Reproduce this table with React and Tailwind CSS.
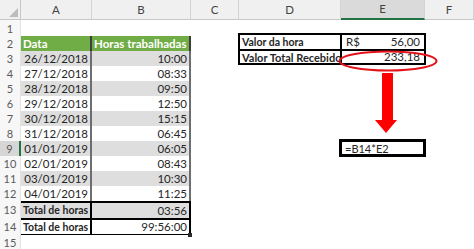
import React from 'react';

const horas = [
  ['26/12/2018', '10:00'],
  ['27/12/2018', '08:33'],
  ['28/12/2018', '09:50'],
  ['29/12/2018', '12:50'],
  ['30/12/2018', '15:15'],
  ['31/12/2018', '06:45'],
  ['01/01/2019', '06:05'],
  ['02/01/2019', '08:43'],
  ['03/01/2019', '10:30'],
  ['04/01/2019', '11:25'],
];

const ColHeader = ({ label, width, active = false }) => (
  <div
    className={`${width} h-full flex items-center justify-center border-r border-[#d4d4d4] text-[#444] ${
      active ? 'bg-[#dadada] border-b-2 border-b-[#217346]' : 'border-b border-b-[#c8c8c8]'
    }`}
  >
    {label}
  </div>
);

const RowLabel = ({ n, active = false }) => (
  <div
    className={`w-[21px] shrink-0 h-full flex items-center justify-center text-[#5a5a5a] ${
      active ? 'bg-[#d6d6d6] border-r-2 border-[#217346]' : 'bg-[#f7f7f7] border-r border-[#e3e3e3]'
    }`}
  >
    {n}
  </div>
);

const Row = ({ n, h = 'h-[15px]', active, children }) => (
  <div className={`flex ${h}`}>
    <RowLabel n={n} active={active} />
    {children}
  </div>
);

export default function App() {
  return (
    <div className="w-[474px] h-[249px] overflow-hidden bg-white font-['Lato',sans-serif] text-[11px] leading-none text-[#262626]">
      {/* column letters */}
      <div className="flex h-[20px] bg-[#f0f0f0] text-[11.5px]">
        <div className="w-[21px] h-full relative border-r border-b border-[#c8c8c8]">
          <div className="absolute right-[2px] bottom-[2px] w-0 h-0 border-l-[9px] border-l-transparent border-b-[9px] border-b-[#bdbdbd]" />
        </div>
        <ColHeader label="A" width="w-[71px]" />
        <ColHeader label="B" width="w-[99px]" />
        <ColHeader label="C" width="w-[48px]" />
        <ColHeader label="D" width="w-[102px]" />
        <ColHeader label="E" width="w-[84px]" active />
        <ColHeader label="F" width="flex-1" />
      </div>

      <div className="flex">
        {/* rows 1..15, columns A to C */}
        <div className="w-[239px] shrink-0">
          <Row n={1} h="h-[16px]">
            <div className="w-[218px]" />
          </Row>
          <Row n={2}>
            <div className="w-[71px] bg-[#70ad47] border-r-2 border-[#3d3d3d] text-white text-[11.5px] font-bold flex items-center pl-[2px]">Data</div>
            <div className="w-[99px] bg-[#70ad47] border-r-2 border-[#3d3d3d] text-white text-[11.5px] font-bold flex items-center pl-[2px] whitespace-nowrap">Horas trabalhadas</div>
          </Row>
          {horas.map(([data, hora], i) => {
            const shade = i % 2 === 0 ? 'bg-[#dedede]' : 'bg-white';
            return (
              <Row key={data} n={i + 3} active={i + 3 === 9}>
                <div className={`w-[71px] ${shade} border-r-2 border-[#6e6e6e] text-[11.5px] flex items-center justify-end pr-[2px]`}>{data}</div>
                <div className={`w-[99px] ${shade} border-r-2 border-[#6e6e6e] text-[11.5px] flex items-center justify-end pr-[2px]`}>{hora}</div>
              </Row>
            );
          })}
          <Row n={13} h="h-[17px]">
            <div className="w-[71px] bg-[#dedede] border-t-2 border-r-2 border-black flex items-center pl-[2px] text-[10.5px] font-bold whitespace-nowrap">Total de horas</div>
            <div className="w-[99px] bg-[#dedede] border-t-2 border-r-2 border-black text-[11.5px] flex items-center justify-end pr-[2px]">03:56</div>
          </Row>
          <Row n={14} h="h-[17px]">
            <div className="w-[71px] border-t-2 border-b border-r-2 border-black flex items-center pl-[2px] text-[10.5px] font-bold whitespace-nowrap">Total de horas</div>
            <div className="w-[99px] relative border-t-2 border-b border-r-2 border-black text-[11.5px] flex items-center justify-end pr-[2px]">
              99:56:00
              <span className="absolute -right-[3px] -bottom-[3px] w-[4px] h-[4px] bg-[#2b2b2b]" />
            </div>
          </Row>
          <Row n={15}>
            <div className="w-[218px]" />
          </Row>
        </div>

        {/* columns D to F */}
        <div className="flex-1 pt-[13px]">
          <div className="relative w-[188px] -ml-[1px] border-2 border-black">
            <div className="flex h-[14px]">
              <div className="w-[102px] border-r-2 border-black flex items-center pl-[2px] text-[10.5px] font-bold whitespace-nowrap">Valor da hora</div>
              <div className="flex-1 flex items-center justify-between px-[4px] text-[11.5px]">
                <span>R$</span>
                <span>56,00</span>
              </div>
            </div>
            <div className="flex h-[14px] border-t-2 border-black">
              <div className="w-[102px] border-r-2 border-black flex items-center pl-[2px] font-bold whitespace-nowrap">Valor Total Recebido</div>
              <div className="flex-1 flex items-center justify-end px-[4px] text-[11.5px]">233,18</div>
            </div>
            <svg className="absolute left-[98px] top-[15px]" width="100" height="22" viewBox="0 0 100 22">
              <ellipse cx="50" cy="11" rx="48.5" ry="9.5" fill="none" stroke="#e3131b" strokeWidth="2" />
            </svg>
          </div>

          <svg className="ml-[136px] mt-[8px] block" width="22" height="60" viewBox="0 0 22 60">
            <rect x="7" y="0" width="11" height="48" fill="#ff0000" />
            <polygon points="0,47 22,47 11,60" fill="#ff0000" />
          </svg>

          <div className="ml-[100px] mt-[6px] w-[87px] h-[18px] border-[3px] border-black flex items-center pl-[3px]">=B14*E2</div>
        </div>
      </div>
    </div>
  );
}
